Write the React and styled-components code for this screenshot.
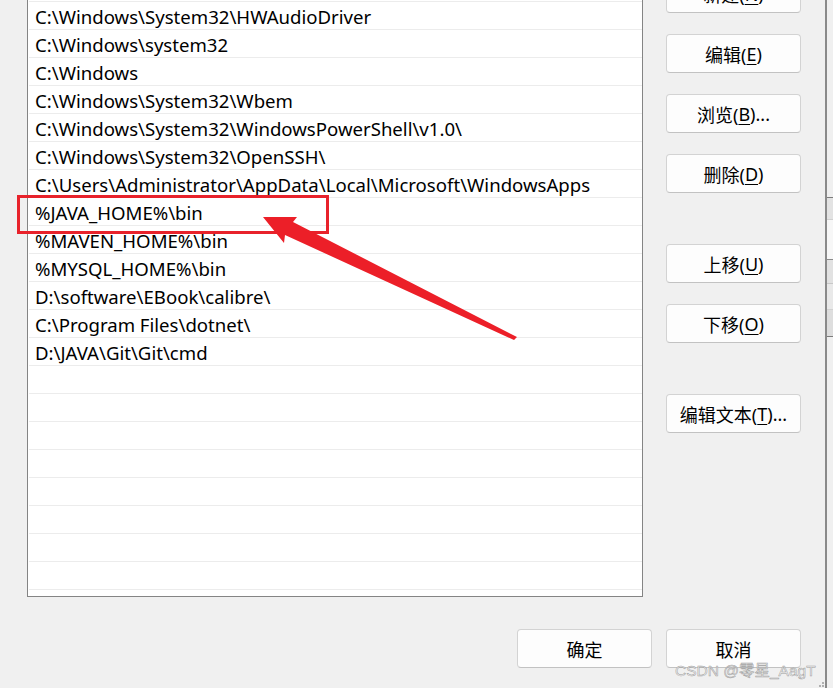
import React from "react"
import styled, { createGlobalStyle } from "styled-components"

const GlobalStyle = createGlobalStyle`
  html, body {
    margin: 0;
    padding: 0;
    background: #f0f0f0;
  }
`

const Screen = styled.div`
  position: relative;
  display: flex;
  width: 833px;
  height: 688px;
  overflow: hidden;
  background: #f0f0f0;
  font-family: "Noto Sans", "Noto Sans CJK SC", sans-serif;
`

const Dialog = styled.div`
  display: flex;
  flex-direction: column;
  width: 827px;
  flex-shrink: 0;
  box-sizing: border-box;
  border-right: 2px solid #8a8a8a;
`

const Body = styled.div`
  display: flex;
  align-items: flex-start;
  margin-top: -27px;
  padding-left: 27px;
`

const PathList = styled.div`
  width: 616px;
  height: 624px;
  box-sizing: border-box;
  border: 1px solid #848484;
  background: #fff;
  padding: 0 0 0 1px;
  overflow: hidden;
`

const Row = styled.div`
  height: 27px;
  border-bottom: 1px solid #ececec;
  padding-left: 6px;
  font-size: 18.6px;
  line-height: 29px;
  color: #000;
  white-space: nowrap;
`

const ButtonColumn = styled.div`
  display: flex;
  flex-direction: column;
  margin-left: 23px;
  margin-top: 1px;
`

const DialogButton = styled.button`
  width: 135px;
  height: 39px;
  margin-top: ${p => p.$gap}px;
  box-sizing: border-box;
  background: #fdfdfd;
  border: 1px solid #d3d3d3;
  border-bottom-color: #c2c2c2;
  border-radius: 4px;
  font-family: "Noto Sans", "Noto Sans CJK SC", sans-serif;
  font-size: 18px;
  color: #000;
  padding: 0;
  display: flex;
  align-items: center;
  justify-content: center;

  u {
    text-underline-offset: 3px;
  }
`

const Footer = styled.div`
  display: flex;
  justify-content: flex-end;
  gap: 14px;
  margin-top: 32px;
  padding-right: 24px;
`

const Behind = styled.div`
  display: flex;
  flex-direction: column;
  flex: 1;
`

const BehindBand = styled.div`
  height: ${p => p.$h}px;
  background: ${p => p.$bg};
  border-bottom: 1px solid ${p => p.$line};
`

const Highlight = styled.div`
  position: absolute;
  left: 17px;
  top: 195px;
  width: 312px;
  height: 39px;
  box-sizing: border-box;
  border: 3px solid #e8222b;
`

const ArrowLayer = styled.svg`
  position: absolute;
  left: 0;
  top: 0;
  pointer-events: none;
`

const Watermark = styled.div`
  position: absolute;
  left: 675px;
  top: 658px;
  font-family: "Liberation Sans", "Noto Sans CJK SC", sans-serif;
  font-size: 15.5px;
  color: rgba(238, 238, 238, 0.85);
  -webkit-text-stroke: 0.5px rgba(140, 140, 140, 0.85);
  white-space: nowrap;
`

const Grip = styled.svg`
  position: absolute;
  right: 8px;
  bottom: 0;
`

const paths = [
  "",
  "C:\\Windows\\System32\\HWAudioDriver",
  "C:\\Windows\\system32",
  "C:\\Windows",
  "C:\\Windows\\System32\\Wbem",
  "C:\\Windows\\System32\\WindowsPowerShell\\v1.0\\",
  "C:\\Windows\\System32\\OpenSSH\\",
  "C:\\Users\\Administrator\\AppData\\Local\\Microsoft\\WindowsApps",
  "%JAVA_HOME%\\bin",
  "%MAVEN_HOME%\\bin",
  "%MYSQL_HOME%\\bin",
  "D:\\software\\EBook\\calibre\\",
  "C:\\Program Files\\dotnet\\",
  "D:\\JAVA\\Git\\Git\\cmd",
  "", "", "", "", "", "", "", "",
]

const sideButtons = [
  { label: "新建", key: "N", gap: 0 },
  { label: "编辑", key: "E", gap: 21 },
  { label: "浏览", key: "B", gap: 21, more: true },
  { label: "删除", key: "D", gap: 21 },
  { label: "上移", key: "U", gap: 51 },
  { label: "下移", key: "O", gap: 21 },
  { label: "编辑文本", key: "T", gap: 51, more: true },
]

const behindBands = [
  { h: 197, bg: "#f0f0f0", line: "#7c7c7c" },
  { h: 21, bg: "#e3e3e3", line: "#d0d0d0" },
  { h: 39, bg: "#f7f7f7", line: "#8a8a8a" },
  { h: 23, bg: "#e2e2e2", line: "#c8c8c8" },
  { h: 25, bg: "#e9e9e9", line: "#d2d2d2" },
  { h: 26, bg: "#dedede", line: "#7c7c7c" },
  { h: 350, bg: "#f0f0f0", line: "transparent" },
]

export default function App() {
  return (
    <>
      <GlobalStyle />
      <Screen>
        <Dialog>
          <Body>
            <PathList>
              {paths.map((p, i) => (
                <Row key={i}>{p}</Row>
              ))}
            </PathList>
            <ButtonColumn>
              {sideButtons.map(b => (
                <DialogButton key={b.label} $gap={b.gap}>
                  {b.label}(<u>{b.key}</u>){b.more ? "..." : ""}
                </DialogButton>
              ))}
            </ButtonColumn>
          </Body>
          <Footer>
            <DialogButton $gap={0}>确定</DialogButton>
            <DialogButton $gap={0}>取消</DialogButton>
          </Footer>
        </Dialog>
        <Behind>
          {behindBands.map((b, i) => (
            <BehindBand key={i} $h={b.h} $bg={b.bg} $line={b.line} />
          ))}
        </Behind>

        <Highlight />
        <ArrowLayer width="833" height="688" viewBox="0 0 833 688">
          <polygon
            points="263,217 297,217 293,222 517,337 514,340 285,235 284,243"
            fill="#ec1f28"
          />
        </ArrowLayer>
        <Watermark>CSDN @零星_AagT</Watermark>
        <Grip width="8" height="8" viewBox="0 0 8 8">
          <rect x="5" y="2" width="2" height="2" fill="#b0b0b0" />
          <rect x="2" y="5" width="2" height="2" fill="#b0b0b0" />
          <rect x="5" y="5" width="2" height="2" fill="#b0b0b0" />
        </Grip>
      </Screen>
    </>
  )
}
